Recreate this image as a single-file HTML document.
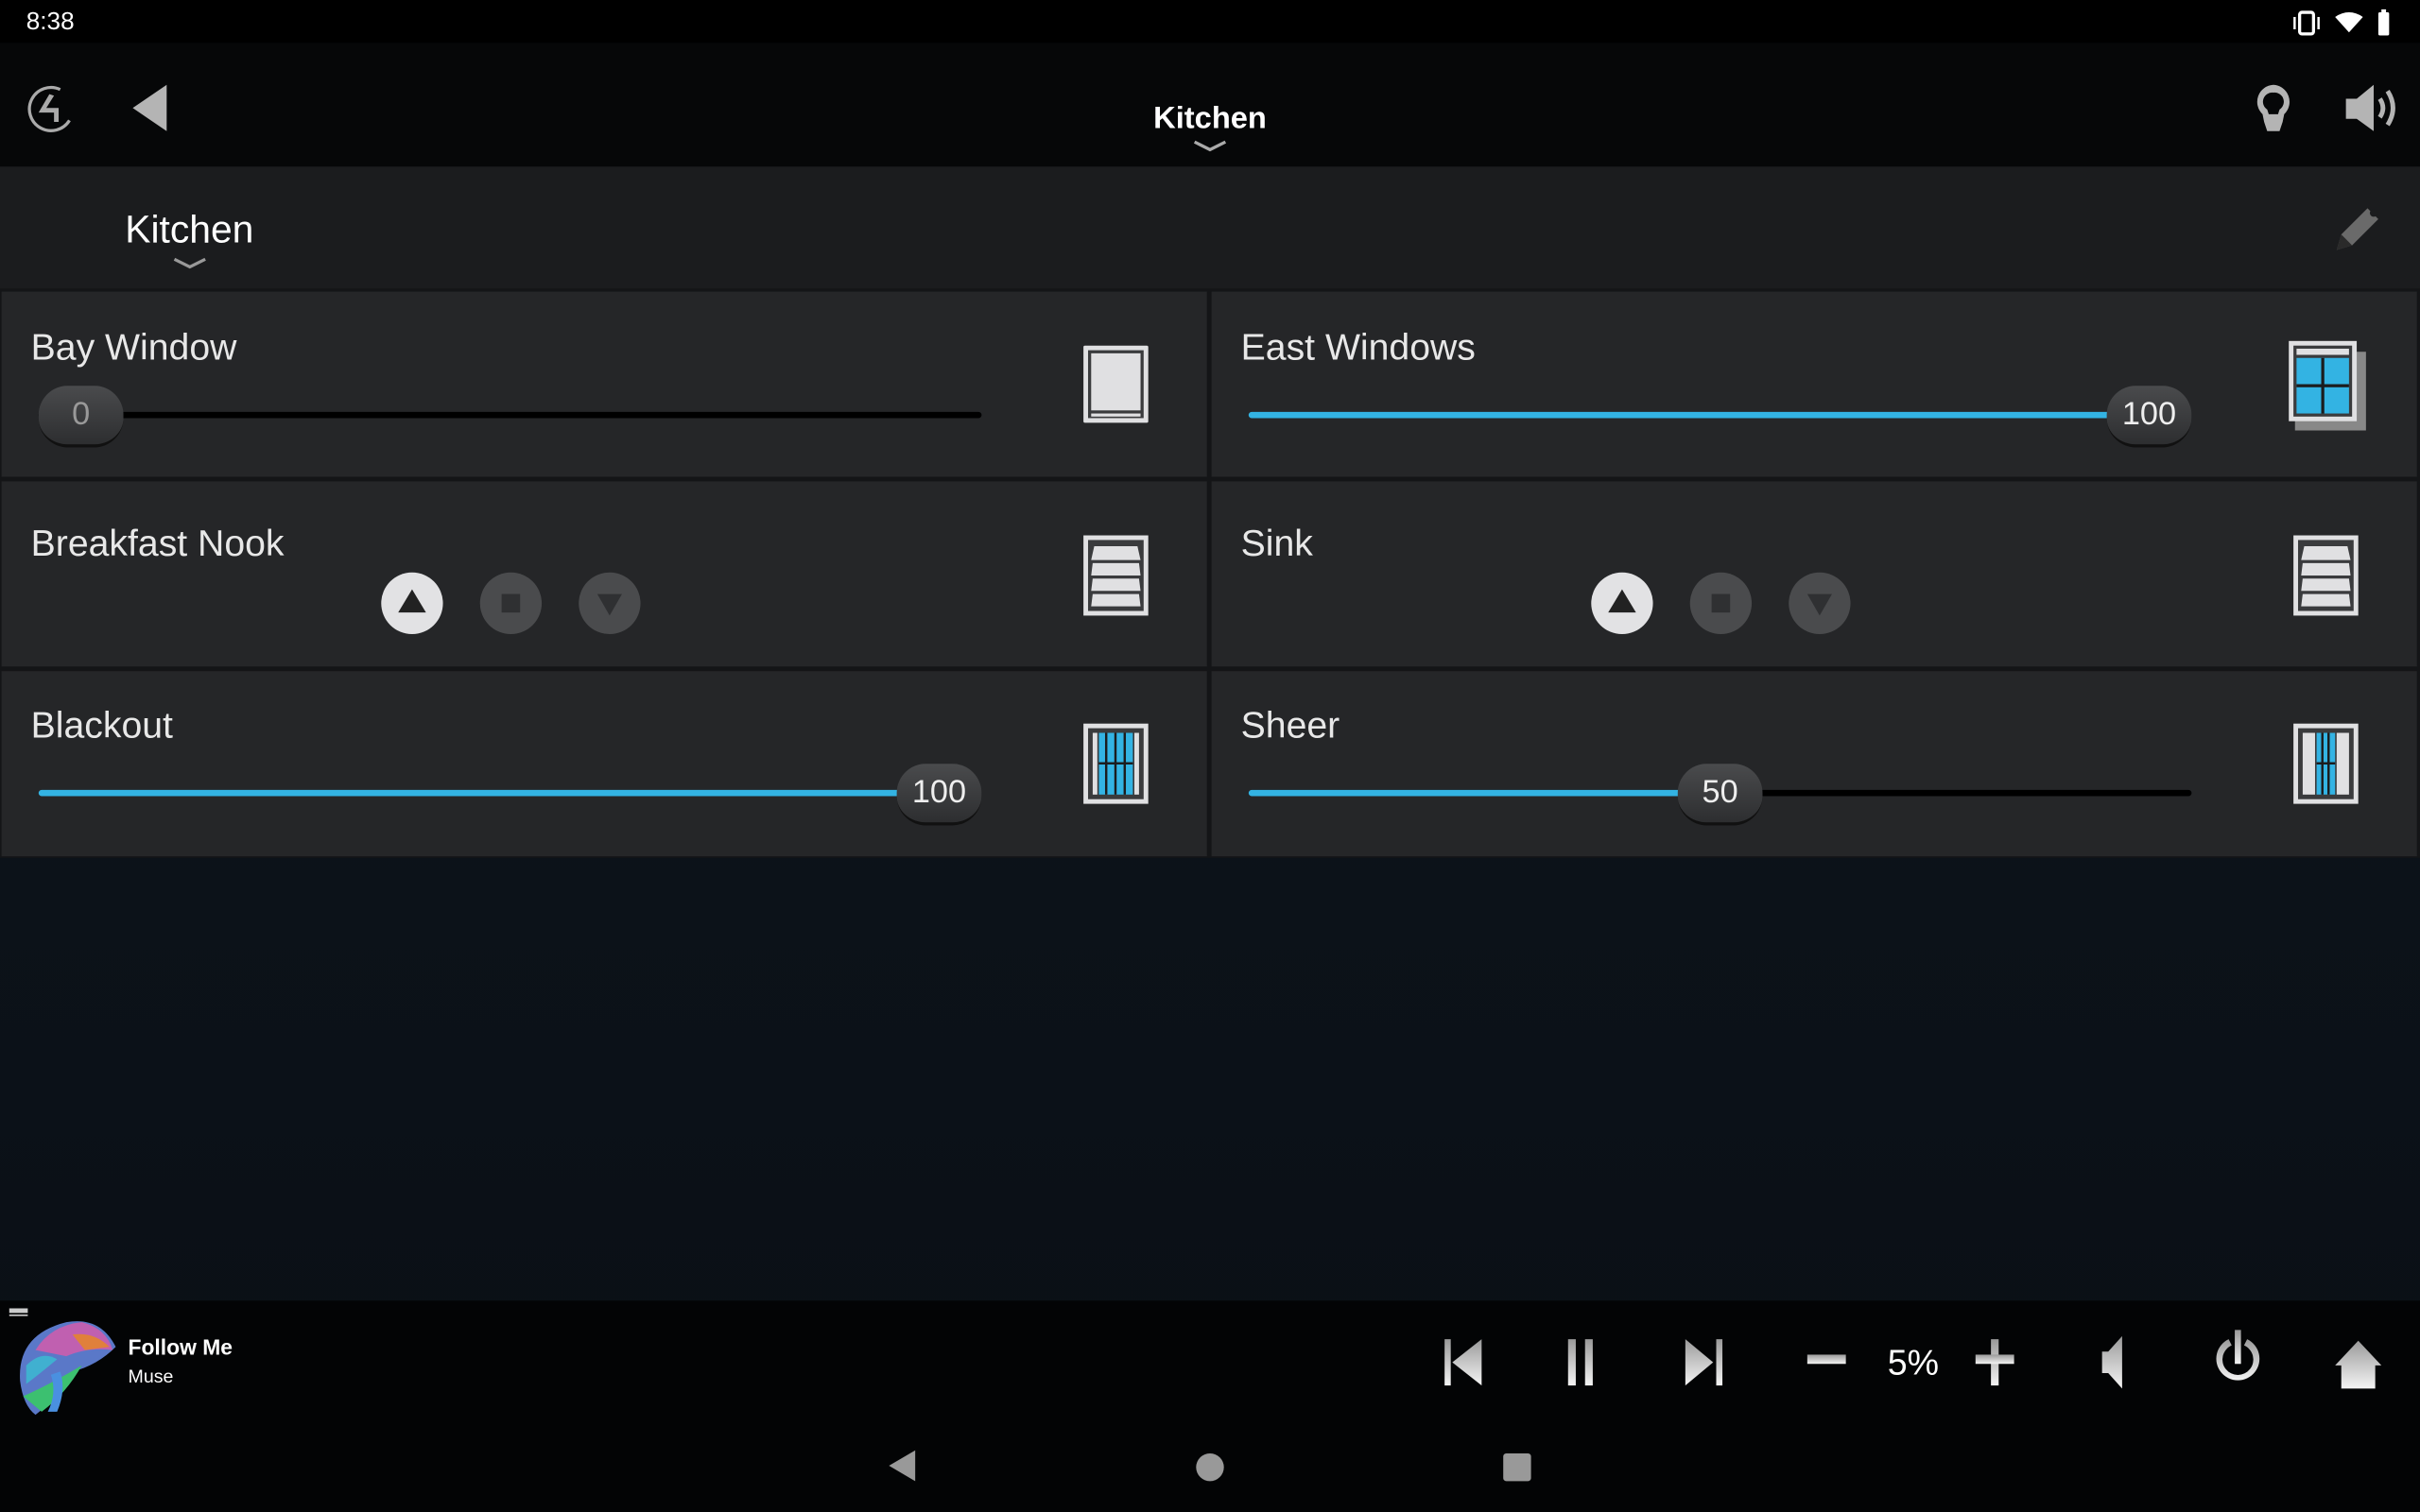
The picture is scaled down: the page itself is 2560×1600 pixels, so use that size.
<!DOCTYPE html>
<html><head><meta charset="utf-8">
<style>
html,body{margin:0;padding:0;width:2560px;height:1600px;overflow:hidden;background:#000;}
#w{position:absolute;left:0;top:0;width:1568px;height:980px;transform:scale(1.632653);transform-origin:0 0;font-family:"Liberation Sans",sans-serif;color:#eee;background:linear-gradient(#0e161f,#0a0f15);}
.a{position:absolute;}
.cell{position:absolute;background:#252628;}
.lbl{position:absolute;font-size:24px;color:#e8e8e8;}
.track{position:absolute;height:4px;border-radius:2px;background:#000;}
.fill{position:absolute;height:4px;border-radius:2px;background:#33b3e3;}
.knob{position:absolute;width:55px;height:38px;border-radius:19px;background:linear-gradient(#4a4b4d,#2d2e30);border-bottom:2px solid #111;color:#eee;font-size:21px;text-align:center;line-height:38px;}
.btn{position:absolute;width:40px;height:40px;border-radius:20px;background:#4a4b4d;}
</style></head><body><div id="w">
<div class="a" style="left:0;top:0;width:1568px;height:28px;background:#000"></div>
<div class="a" style="left:17px;top:6px;font-size:16px;color:#fff">8:38</div>
<svg class="a" style="left:1484px;top:6px" width="80" height="18" viewBox="0 0 80 18">
<rect x="6" y="2" width="9" height="14" rx="1.5" fill="none" stroke="#fff" stroke-width="2"/><rect x="2" y="5" width="1.5" height="8" fill="#fff"/><rect x="17.5" y="5" width="1.5" height="8" fill="#fff"/>
<path d="M29 5 Q38 -1 47 5 L38 15 Z" fill="#fff"/>
<rect x="57" y="2" width="7" height="15" rx="1" fill="#fff"/><rect x="59" y="0" width="3" height="3" fill="#fff"/></svg>
<div class="a" style="left:0;top:28px;width:1568px;height:80px;background:#060708"></div>
<svg class="a" style="left:15px;top:52px" width="36" height="36" viewBox="0 0 36 36"><path d="M24 6 A14 14 0 1 0 30 26" fill="none" stroke="#aaa" stroke-width="2"/><path d="M17 9 L10 21 H20 V27 H23 V18 H15 L20 10Z" fill="#aaa"/></svg>
<svg class="a" style="left:84px;top:53px" width="26" height="34"><path d="M24 2 V32 L2 17Z" fill="#b4b4b4"/></svg>
<div class="a" style="left:0;width:1568px;top:66px;text-align:center;font-size:20px;font-weight:bold;color:#fff">Kitchen</div>
<svg class="a" style="left:772px;top:90px" width="24" height="10"><path d="M2 2 L12 7 L22 2" fill="none" stroke="#aaa" stroke-width="2"/></svg>
<svg class="a" style="left:1458px;top:52px" width="30" height="36" viewBox="0 0 30 36"><path d="M15 3 A11 11 0 0 0 8 22 L9 27 H21 L22 22 A11 11 0 0 0 15 3Z M15 8 A6 6 0 0 1 19 19 L18 22 H12 L11 19 A6 6 0 0 1 15 8Z" fill="#b4b4b4" fill-rule="evenodd"/><path d="M9 27 H21 L19 33 H11Z" fill="#b4b4b4"/></svg>
<svg class="a" style="left:1518px;top:52px" width="38" height="36" viewBox="0 0 38 36"><path d="M2 12 H9 L20 3 V33 L9 25 H2Z" fill="#b4b4b4"/><path d="M24 12 Q28 18 24 24" fill="none" stroke="#b4b4b4" stroke-width="3"/><path d="M29 7 Q36 18 29 29" fill="none" stroke="#b4b4b4" stroke-width="3"/></svg>
<div class="a" style="left:0;top:108px;width:1568px;height:80px;background:#1b1c1e"></div>
<div class="a" style="left:81px;top:135px;font-size:25px;color:#fff">Kitchen</div>
<svg class="a" style="left:111px;top:166px" width="24" height="10"><path d="M2 2 L12 7 L22 2" fill="none" stroke="#999" stroke-width="2"/></svg>
<svg class="a" style="left:1512px;top:130px" width="34" height="34" viewBox="0 0 34 34"><path d="M22 5 L29 12 L12 29 L2 32 L5 22Z" fill="#6a6a6a"/><circle cx="26" cy="8" r="2.5" fill="#1b1c1e"/><path d="M5 22 L12 29 L2 32Z" fill="#2a2a2a"/></svg>
<div class="a" style="left:0;top:187px;width:1568px;height:369px;background:#141517"></div>
<div class="cell" style="left:1px;top:189px;width:781px;height:120px"></div>
<div class="cell" style="left:785px;top:189px;width:781px;height:120px"></div>
<div class="cell" style="left:1px;top:312px;width:781px;height:120px"></div>
<div class="cell" style="left:785px;top:312px;width:781px;height:120px"></div>
<div class="cell" style="left:1px;top:435px;width:781px;height:120px"></div>
<div class="cell" style="left:785px;top:435px;width:781px;height:120px"></div>

<div class="lbl" style="left:20px;top:212px">Bay Window</div>
<div class="track" style="left:25px;top:267px;width:611px"></div>
<div class="knob" style="left:25px;top:250px;color:#999">0</div>

<div class="lbl" style="left:804px;top:212px">East Windows</div>
<div class="fill" style="left:809px;top:267px;width:580px"></div>
<div class="knob" style="left:1365px;top:250px">100</div>

<div class="lbl" style="left:20px;top:339px">Breakfast Nook</div>
<div class="lbl" style="left:804px;top:339px">Sink</div>

<div class="lbl" style="left:20px;top:457px">Blackout</div>
<div class="fill" style="left:25px;top:512px;width:580px"></div>
<div class="knob" style="left:581px;top:495px">100</div>

<div class="lbl" style="left:804px;top:457px">Sheer</div>
<div class="track" style="left:809px;top:512px;width:611px"></div>
<div class="fill" style="left:809px;top:512px;width:300px"></div>
<div class="knob" style="left:1087px;top:495px">50</div>

<div class="btn" style="left:247px;top:371px;background:#e2e2e4"></div><svg class="a" style="left:257px;top:380px" width="20" height="20"><path d="M10 2 L19 17 H1Z" fill="#222"/></svg>
<div class="btn" style="left:311px;top:371px"></div><div class="a" style="left:325px;top:385px;width:12px;height:12px;background:#2f3032"></div>
<div class="btn" style="left:375px;top:371px"></div><svg class="a" style="left:385px;top:382px" width="20" height="20"><path d="M2 3 H18 L10 17Z" fill="#2f3032"/></svg>
<div class="btn" style="left:1031px;top:371px;background:#e2e2e4"></div><svg class="a" style="left:1041px;top:380px" width="20" height="20"><path d="M10 2 L19 17 H1Z" fill="#222"/></svg>
<div class="btn" style="left:1095px;top:371px"></div><div class="a" style="left:1109px;top:385px;width:12px;height:12px;background:#2f3032"></div>
<div class="btn" style="left:1159px;top:371px"></div><svg class="a" style="left:1169px;top:382px" width="20" height="20"><path d="M2 3 H18 L10 17Z" fill="#2f3032"/></svg>

<svg class="a" style="left:701px;top:223px" width="44" height="56" viewBox="0 0 44 56"><rect x="1" y="1" width="42" height="50" rx="1" fill="#e0e0e2"/><rect x="4" y="4" width="36" height="44" fill="#3a3b3d"/><rect x="6" y="6" width="32" height="37" fill="#e0e0e2"/><rect x="6" y="45" width="32" height="2" fill="#e0e0e2"/></svg>
<svg class="a" style="left:1482px;top:220px" width="52" height="60" viewBox="0 0 52 60"><rect x="5" y="8" width="46" height="51" fill="#888"/><rect x="1" y="1" width="44" height="52" fill="#e0e0e2"/><rect x="4" y="4" width="38" height="46" fill="#3a3b3d"/><rect x="6" y="6" width="34" height="4" fill="#e0e0e2"/><rect x="6" y="12" width="34" height="36" fill="#33b3e3"/><rect x="22" y="12" width="2" height="36" fill="#1b1c1e"/><rect x="6" y="29" width="34" height="2" fill="#1b1c1e"/></svg>
<svg class="a" style="left:701px;top:346px" width="44" height="54" viewBox="0 0 44 54"><rect x="1" y="1" width="42" height="52" fill="#e0e0e2"/><rect x="4" y="4" width="36" height="46" fill="#3a3b3d"/><path d="M8 8 H36 L38 17 H6Z M7 19 H37 L38 27 H6Z M7 29 H37 L38 37 H6Z M7 39 H37 L38 47 H6Z" fill="#e0e0e2"/></svg>
<svg class="a" style="left:1485px;top:346px" width="44" height="54" viewBox="0 0 44 54"><rect x="1" y="1" width="42" height="52" fill="#e0e0e2"/><rect x="4" y="4" width="36" height="46" fill="#3a3b3d"/><path d="M8 8 H36 L38 17 H6Z M7 19 H37 L38 27 H6Z M7 29 H37 L38 37 H6Z M7 39 H37 L38 47 H6Z" fill="#e0e0e2"/></svg>
<svg class="a" style="left:701px;top:468px" width="44" height="54" viewBox="0 0 44 54"><rect x="1" y="1" width="42" height="52" fill="#e0e0e2"/><rect x="4" y="4" width="36" height="46" fill="#3a3b3d"/><rect x="7" y="7" width="3" height="40" fill="#e0e0e2"/><rect x="34" y="7" width="3" height="40" fill="#e0e0e2"/><rect x="11" y="7" width="22" height="40" fill="#33b3e3"/><rect x="15" y="7" width="1.5" height="40" fill="#1b1c1e"/><rect x="21" y="7" width="1.5" height="40" fill="#1b1c1e"/><rect x="27" y="7" width="1.5" height="40" fill="#1b1c1e"/><rect x="11" y="26" width="22" height="1.5" fill="#1b1c1e"/></svg>
<svg class="a" style="left:1485px;top:468px" width="44" height="54" viewBox="0 0 44 54"><rect x="1" y="1" width="42" height="52" fill="#e0e0e2"/><rect x="4" y="4" width="36" height="46" fill="#3a3b3d"/><rect x="7" y="7" width="8" height="40" fill="#e0e0e2"/><rect x="29" y="7" width="8" height="40" fill="#e0e0e2"/><rect x="16" y="7" width="12" height="40" fill="#33b3e3"/><rect x="19" y="7" width="1.5" height="40" fill="#1b1c1e"/><rect x="23" y="7" width="1.5" height="40" fill="#1b1c1e"/><rect x="16" y="26" width="12" height="1.5" fill="#1b1c1e"/></svg>

<div class="a" style="left:0;top:843px;width:1568px;height:137px;background:#030405"></div>
<svg class="a" style="left:3px;top:845px" width="76" height="76" viewBox="0 0 76 76">
<rect x="3" y="3" width="12" height="3" fill="#ccc"/><rect x="3" y="7" width="12" height="1" fill="#ccc"/>
<path d="M10 50 Q8 20 40 12 Q62 8 72 28 Q60 40 44 44 Q36 60 20 72 Q12 66 10 50Z" fill="#5a78c8"/>
<path d="M20 30 Q30 14 50 12 Q66 16 70 30 Q54 28 40 34Z" fill="#c060b0"/>
<path d="M12 60 Q30 52 50 40 Q40 58 24 70Z" fill="#3cc070"/>
<path d="M44 20 Q58 18 68 28 L52 30Z" fill="#e0803c"/>
<path d="M14 40 Q24 30 34 36 Q22 46 14 52Z" fill="#40b0d0"/>
<path d="M36 44 Q40 56 34 70 L28 70 Q34 58 30 46Z" fill="#4a90e0"/></svg>
<div class="a" style="left:83px;top:865px;font-size:14px;font-weight:bold;color:#fff">Follow Me</div>
<div class="a" style="left:83px;top:885px;font-size:12px;color:#fff">Muse</div>
<svg class="a" style="left:930px;top:860px" width="630" height="46" viewBox="0 0 630 46">
<defs><linearGradient id="g" x1="0" y1="0" x2="0" y2="1"><stop offset="0" stop-color="#9a9a9a"/><stop offset="1" stop-color="#f4f4f4"/></linearGradient></defs>
<g fill="url(#g)">
<rect x="6" y="8" width="4" height="30"/><path d="M11 23 L30 8 V38Z"/>
<rect x="86" y="8" width="5" height="30"/><rect x="97" y="8" width="5" height="30"/>
<path d="M162 8 L180 23 L162 38Z"/><rect x="182" y="8" width="4" height="30"/>
<rect x="241" y="18" width="25" height="6"/>
<rect x="360" y="8" width="5" height="30"/><rect x="350" y="18" width="25" height="6"/>
<path d="M432 16 H436 L445 6 V40 L436 30 H432Z"/>
<path d="M514 8 A14 14 0 1 0 526 8 L524 12 A10 10 0 1 1 516 12Z"/><rect x="518" y="2" width="4" height="22"/>
<path d="M583 25 L598 9 L613 25 H609 V40 H587 V25Z"/>
</g>
<text x="293" y="31" font-family="Liberation Sans" font-size="23" fill="#fff">5%</text>
</svg>
<svg class="a" style="left:574px;top:938px" width="20" height="24"><path d="M19 2 V22 L2 12Z" fill="#999"/></svg>
<div class="a" style="left:775px;top:942px;width:18px;height:18px;border-radius:9px;background:#999"></div>
<div class="a" style="left:974px;top:942px;width:18px;height:18px;border-radius:2px;background:#999"></div>
</div></body></html>
